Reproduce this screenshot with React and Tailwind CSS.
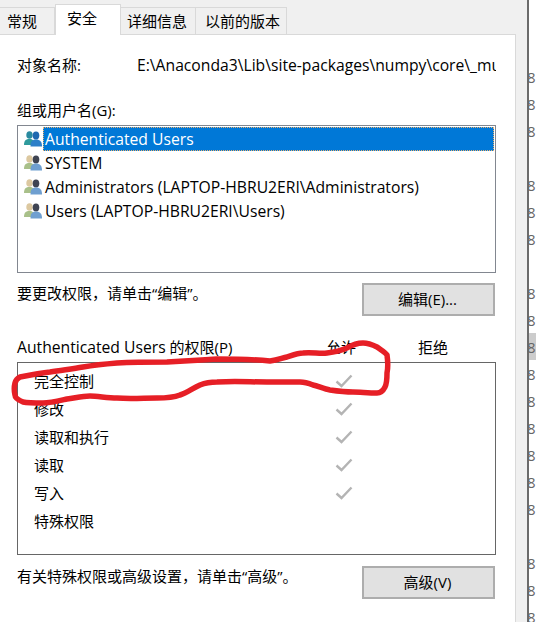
import React from "react";

const font = { fontFamily: '"Open Sans","Noto Sans CJK SC",sans-serif' };

function UserIcon({ selected }) {
  const a = selected ? "#2f9a9c" : "#a9c08a";
  const aHead = selected ? "#2a8aa0" : "#dcc8a0";
  const b = selected ? "#2d7fc8" : "#6f9fd0";
  const bHead = selected ? "#1f68b0" : "#3f4452";
  return (
    <svg width="18" height="16" viewBox="0 0 18 16" className="shrink-0">
      <ellipse cx="5.5" cy="4" rx="3.2" ry="3.8" fill={aHead} />
      <path d="M0 14 C0 9.500 2 8 5.500 8 C9 8 10 9.500 10 14 Z" fill={a} />
      <ellipse cx="12" cy="4.500" rx="3.300" ry="4" fill={bHead} />
      <path d="M6.500 15.500 C6.500 10.500 8 8.500 12 8.500 C16 8.500 18 10.500 18 15.500 Z" fill={b} />
    </svg>
  );
}

function Check() {
  return (
    <svg width="18" height="14" viewBox="0 0 18 14">
      <path d="M1.500 7.500 L6.500 12 L16.500 1.500" fill="none" stroke="#b4b4b4" strokeWidth="2.400" />
    </svg>
  );
}

const users = [
  "Authenticated Users",
  "SYSTEM",
  "Administrators (LAPTOP-HBRU2ERI\\Administrators)",
  "Users (LAPTOP-HBRU2ERI\\Users)",
];

const perms = [
  ["完全控制", true],
  ["修改", true],
  ["读取和执行", true],
  ["读取", true],
  ["写入", true],
  ["特殊权限", false],
];

// 27px rows in the sliver of window behind the dialog; blank where the row is empty.
const sliver = [1,1,1,0,1,1,1,0,1,1,2,1,1,1,1,1,1,0,1,1,1];

export default function App() {
  return (
    <div style={font} className="relative flex w-[536px] h-[622px] overflow-hidden bg-[#f0f0f0] text-[15px] leading-[20px] text-black">
      <div className="w-[516px] h-full flex flex-col shrink-0">
        <div className="flex items-end h-[34px] pt-[4px] relative z-10 text-[15px]">
          <div className="w-[55px] h-[27px] border-t border-r border-[#d9d9d9] bg-[#f0f0f0] pl-[7px] pt-[3px]">常规</div>
          <div className="w-[66px] h-[31px] -mb-px bg-white border border-b-0 border-[#d9d9d9] pl-[11px] pt-[3px]">安全</div>
          <div className="w-[75px] h-[27px] border-t border-r border-[#d9d9d9] pl-[6px] pt-[3px]">详细信息</div>
          <div className="w-[91px] h-[27px] border-t border-r border-[#d9d9d9] pl-[9px] pt-[3px]">以前的版本</div>
        </div>
        <div className="flex-1 bg-white border-t border-r border-[#d9d9d9] pl-[17px] pr-[19px] flex flex-col">
          <div className="flex h-[20px] mt-[20px] whitespace-nowrap">
            <div className="w-[120px] shrink-0">对象名称:</div>
            <div className="overflow-hidden text-[15.7px]">E:\Anaconda3\Lib\site-packages\numpy\core\_mu</div>
          </div>
          <div className="mt-[25px] h-[20px]">组或用户名(G):</div>
          <div className="mt-[5px] h-[148px] border border-[#828790] pl-[6px] pr-px pt-[1px] flex flex-col text-[15.7px]">
            {users.map((u, i) => (
              <div key={u} className="flex items-center h-[24px] whitespace-nowrap">
                <UserIcon selected={i === 0} />
                <div className={i === 0 ? "ml-[1px] flex-1 h-[24px] pl-[1px] flex items-center bg-[#0078d7] text-white border border-dotted border-[#e8b070]" : "ml-[1px] pl-[2px] flex-1 flex items-center"}>{u}</div>
              </div>
            ))}
          </div>
          <div className="flex justify-between mt-[10px] h-[34px]">
            <div>要更改权限，请单击“编辑”。</div>
            <div className="w-[133px] h-[33px] mr-px pb-[2px] pr-[2px] bg-[#e1e1e1] border-2 border-[#adadad] flex items-center justify-center">编辑(E)...</div>
          </div>
          <div className="flex mt-[20px] h-[20px] whitespace-nowrap">
            <div className="w-[309px]"><span className="text-[15.7px]">Authenticated Users</span> 的权限(P)</div>
            <div className="w-[92px]">允许</div>
            <div>拒绝</div>
          </div>
          <div className="mt-[5px] h-[193px] border border-[#666666] pl-[16px] pt-[4px] flex flex-col">
            {perms.map(([p, c]) => (
              <div key={p} className="flex items-center h-[28px]">
                <div className="w-[301px]">{p}</div>
                {c && <Check />}
              </div>
            ))}
          </div>
          <div className="flex justify-between mt-[11px] h-[34px]">
            <div>有关特殊权限或高级设置，请单击“高级”。</div>
            <div className="w-[133px] h-[33px] mr-px pb-[2px] pr-[2px] bg-[#e1e1e1] border-2 border-[#adadad] flex items-center justify-center">高级(V)</div>
          </div>
        </div>
      </div>
      <div className="w-[11px] shrink-0" />
      <div className="w-[2px] shrink-0 bg-[#6b6b6b]" />
      <div className="flex-1 bg-white pt-[63px] text-[#666666]">
        {sliver.map((s, i) => (
          <div key={i} className={s === 2 ? "h-[27px] flex items-center bg-[#cccccc]" : "h-[27px] flex items-center"}>
            {s > 0 ? <span className="-ml-[2px]">8</span> : null}
          </div>
        ))}
      </div>
      <svg className="absolute left-0 top-0 pointer-events-none z-20" width="536" height="622" viewBox="0 0 536 622">
        <path
          d="M15 383 C16 379 18 378 20 377 C30 375 40 373 50 372 C62 370 72 369 83 367 C95 365 105 364 117 363 C135 362 150 362 167 362 C185 361 200 360 217 359 C235 359 250 359 270 361 C278 360 282 358 287 357 C293 355 298 353 303 353 C312 352 320 354 327 353 C335 352 340 351 347 348 C352 345 358 343 363 343 C368 343 373 345 377 347 C381 350 385 352 387 355 C388 362 388 368 387 373 C387 379 387 383 385 387 C383 391 380 393 377 393 C368 393 360 392 353 392 C345 392 337 391 330 390 C324 389 318 386 313 385 C308 383 304 382 300 382 C290 382 280 382 267 382 C250 382 235 381 217 382 C210 382 205 383 200 385 C193 388 187 393 180 395 C172 398 165 398 157 398 C144 398 130 399 117 398 C107 398 98 396 90 396 C82 396 75 398 67 399 C58 401 50 403 43 403 C35 403 28 403 23 402 C18 400 15 398 15 395 C14 391 14 387 15 383 Z"
          fill="none"
          stroke="#e61f26"
          strokeWidth="5.5"
          strokeLinejoin="round"
        />
      </svg>
    </div>
  );
}
